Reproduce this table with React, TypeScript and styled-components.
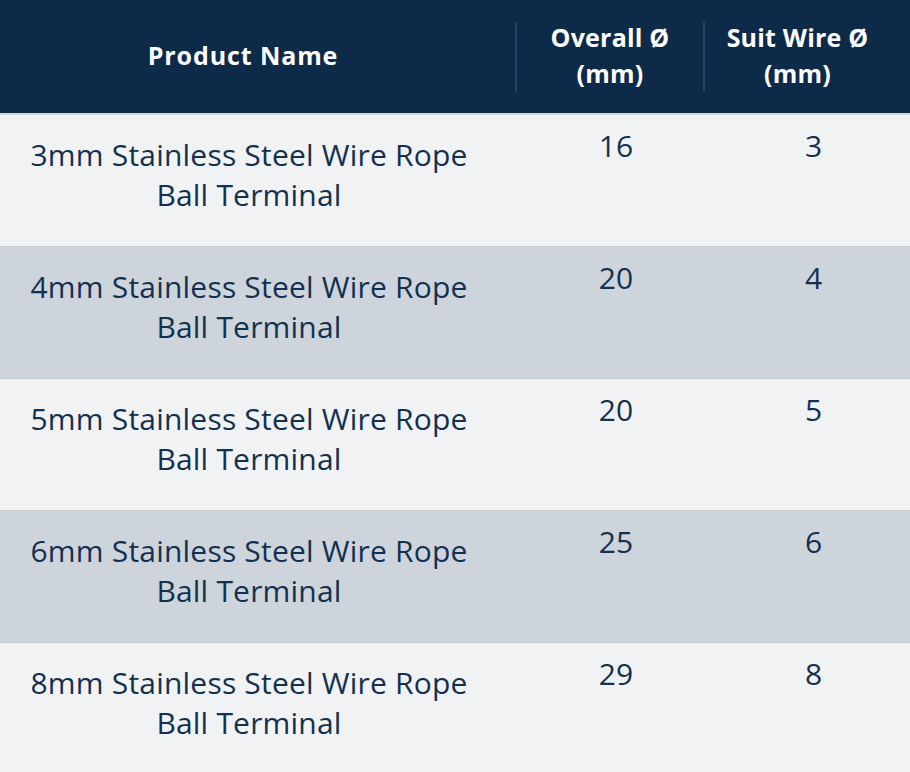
import styled, { createGlobalStyle } from 'styled-components';

const GlobalStyle = createGlobalStyle`
  html, body {
    margin: 0;
    padding: 0;
    background: #f0f2f4;
  }
  body {
    font-family: "Open Sans", "Liberation Sans", sans-serif;
  }
`;

type Product = {
  size: number;
  overall: number;
};

const products: Product[] = [
  { size: 3, overall: 16 },
  { size: 4, overall: 20 },
  { size: 5, overall: 20 },
  { size: 6, overall: 25 },
  { size: 8, overall: 29 },
];

const App = () => {
  return (
    <>
      <GlobalStyle />
      <Table>
        <HeadRow>
          <HeadCell $padRight={29} $wide>Product Name</HeadCell>
          <HeadCell $divider>
            Overall Ø<br />(mm)
          </HeadCell>
          <HeadCell $divider $padRight={20}>
            Suit Wire Ø<br />(mm)
          </HeadCell>
        </HeadRow>
        {products.map((p, i) => (
          <Row key={p.size} $shaded={i % 2 === 1}>
            <NameCell>
              {p.size}mm Stainless Steel Wire Rope
              <br />
              Ball Terminal
            </NameCell>
            <NumCell>{p.overall}</NumCell>
            <NumCell>{p.size}</NumCell>
          </Row>
        ))}
      </Table>
    </>
  );
};

const Table = styled.div`
  width: 910px;
  color: #14304f;
`;

const HeadRow = styled.div`
  display: grid;
  grid-template-columns: 515px 188px 1fr;
  align-items: center;
  height: 113px;
  background: #0e2a49;
  border-bottom: 2px solid #d3d5d8;
`;

const HeadCell = styled.div<{ $divider?: boolean; $padRight?: number; $wide?: boolean }>`
  height: 70px;
  display: flex;
  align-items: center;
  justify-content: center;
  text-align: center;
  box-sizing: border-box;
  padding-right: ${(p) => p.$padRight ?? 0}px;
  padding-bottom: 4px;
  border-left: ${(p) => (p.$divider ? '2px solid #2b3d68' : 'none')};
  color: #ffffff;
  font-weight: 700;
  font-size: 25px;
  line-height: 36px;
  letter-spacing: ${(p) => (p.$wide ? '0.9px' : '0.2px')};
`;

const Row = styled.div<{ $shaded: boolean }>`
  display: grid;
  grid-template-columns: 515px 188px 1fr;
  height: 131px;
  background: ${(p) => (p.$shaded ? '#cdd4db' : '#f0f2f4')};
  border-bottom: 1px solid #c7c9cb;
`;

const NameCell = styled.div`
  padding: 20px 17px 0 0;
  text-align: center;
  font-size: 30px;
  line-height: 40px;
  letter-spacing: 0.2px;
`;

const NumCell = styled.div`
  padding: 11px 0 0 14px;
  text-align: center;
  font-size: 30px;
  line-height: 40px;
`;

export default App;
